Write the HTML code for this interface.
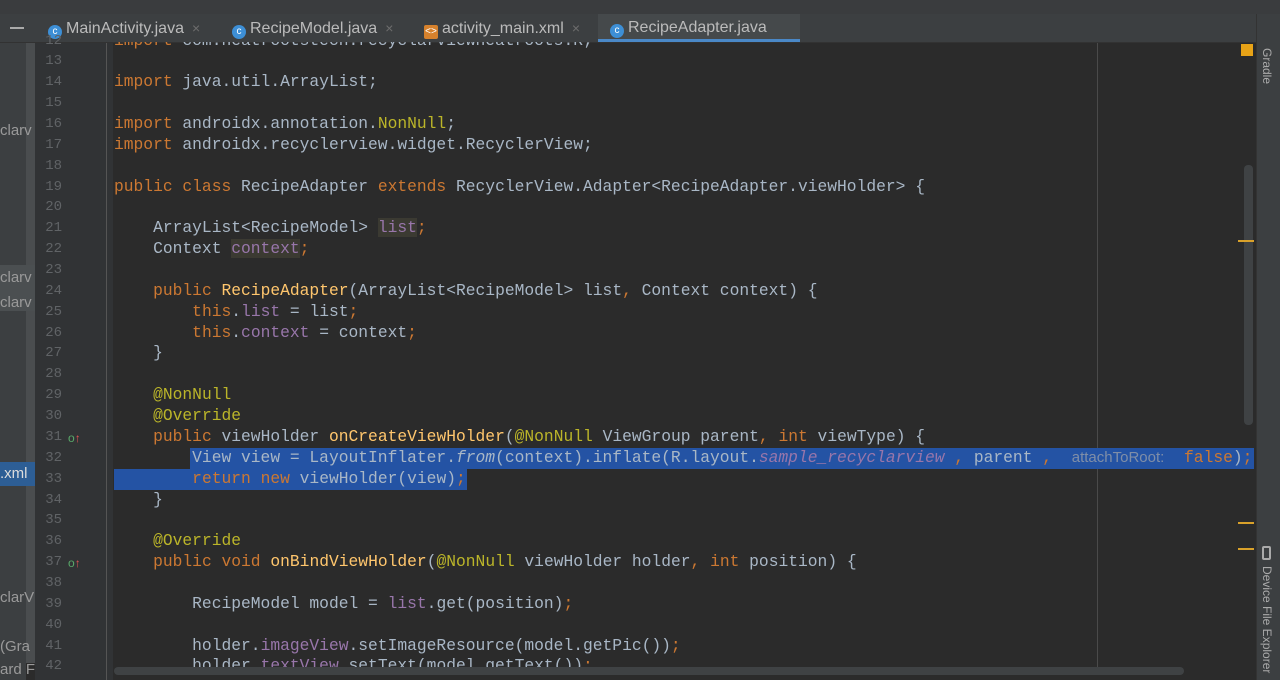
<!DOCTYPE html><html><head><style>
body{margin:0;width:1280px;height:680px;overflow:hidden;background:#2b2b2b;position:relative;font-family:"Liberation Sans",sans-serif}
.abs{position:absolute}
.code{position:absolute;left:114px;top:30.6px;font-family:"Liberation Mono",monospace;font-size:16.3px;line-height:20.86px;color:#a9b7c6;white-space:pre}
.ln{position:absolute;left:38px;top:30.6px;width:24px;text-align:right;font-family:"Liberation Mono",monospace;font-size:14px;line-height:20.86px;color:#606366;white-space:pre}
.k{color:#cc7832}.a{color:#bbb529}.f{color:#ffc66d}.p{color:#9876aa}.i{font-style:italic}
.tab{position:absolute;top:14px;height:28px;line-height:28px;font-size:16px;color:#bbbbbb}
.ci{display:inline-block;width:14px;height:14px;border-radius:50%;background:#3d8fd6;color:#fff;font-size:10px;line-height:14px;text-align:center;vertical-align:-1px;margin-right:4px}
.x{color:#6d6d6d;margin-left:8px;font-size:14px}
.lp{position:absolute;left:0;font-size:15px;color:#9a9a9a}
</style></head><body>
<div class="abs" style="left:0;top:0;width:1280px;height:14px;background:#3a3c3e"></div>
<div class="abs" style="left:0;top:14px;width:1256px;height:28px;background:#3c3f41;border-bottom:1px solid #323232"></div>
<div class="abs" style="left:10px;top:27px;width:14px;height:2px;background:#aaa"></div>
<div class="tab" style="left:48px"><span class="ci">c</span>MainActivity.java<span class="x">×</span></div>
<div class="tab" style="left:232px"><span class="ci">c</span>RecipeModel.java<span class="x">×</span></div>
<div class="tab" style="left:424px"><span class="ci" style="background:#d6812c;border-radius:2px">&lt;&gt;</span>activity_main.xml<span class="x">×</span></div>
<div class="tab" style="left:598px;width:202px;background:#45494b"><span class="ci" style="margin-left:12px">c</span>RecipeAdapter.java</div>
<div class="abs" style="left:598px;top:39px;width:202px;height:3px;background:#4a88c7"></div>
<div class="abs" style="left:0;top:43px;width:26px;height:637px;background:#3c3f41"></div>
<div class="abs" style="left:26px;top:43px;width:9px;height:620px;background:#4a4d4f"></div>
<div class="abs" style="left:0;top:265px;width:35px;height:46px;background:#4b4f51"></div>
<div class="abs" style="left:0;top:462px;width:35px;height:24px;background:#2d5e95"></div>
<div class="lp" style="top:122px">clarv</div>
<div class="lp" style="top:269px">clarv</div>
<div class="lp" style="top:294px">clarv</div>
<div class="lp" style="top:465px;color:#ddd">.xml</div>
<div class="lp" style="top:589px">clarV</div>
<div class="lp" style="top:638px">(Gra</div>
<div class="lp" style="top:661px">ard F</div>
<div class="abs" style="left:35px;top:43px;width:78px;height:637px;background:#313335"></div>
<div class="abs" style="left:106px;top:43px;width:1px;height:637px;background:#555"></div>
<div class="abs" style="left:1097px;top:43px;width:1px;height:625px;background:#4a4a4a"></div>
<div class="abs" style="left:190px;top:448px;width:1064px;height:21px;background:#2453a4"></div>
<div class="abs" style="left:114px;top:469px;width:353px;height:21px;background:#2453a4"></div>
<div class="ln">12
13
14
15
16
17
18
19
20
21
22
23
24
25
26
27
28
29
30
31
32
33
34
35
36
37
38
39
40
41
42</div>
<div class="abs" style="left:68px;top:431px;color:#59a869;font-size:12px">o<span style="color:#e05555">↑</span></div>
<div class="abs" style="left:68px;top:556px;color:#59a869;font-size:12px">o<span style="color:#e05555">↑</span></div>
<div class="code" style="clip-path:inset(11.4px 0 0 0)"><span class="k">import</span> com.heatrootstech.recyclarviewheatroots.R;

<span class="k">import</span> java.util.ArrayList;

<span class="k">import</span> androidx.annotation.<span class="a">NonNull</span>;
<span class="k">import</span> androidx.recyclerview.widget.RecyclerView;

<span class="k">public class</span> RecipeAdapter <span class="k">extends</span> RecyclerView.Adapter&lt;RecipeAdapter.viewHolder&gt; {

    ArrayList&lt;RecipeModel&gt; <span class="p" style="background:#3b3a32">list</span><span class="k">;</span>
    Context <span class="p" style="background:#3b3a32">context</span><span class="k">;</span>

    <span class="k">public</span> <span class="f">RecipeAdapter</span>(ArrayList&lt;RecipeModel&gt; list<span class="k">,</span> Context context) {
        <span class="k">this</span>.<span class="p">list</span> = list<span class="k">;</span>
        <span class="k">this</span>.<span class="p">context</span> = context<span class="k">;</span>
    }

    <span class="a">@NonNull</span>
    <span class="a">@Override</span>
    <span class="k">public</span> viewHolder <span class="f">onCreateViewHolder</span>(<span class="a">@NonNull</span> ViewGroup parent<span class="k">,</span> <span class="k">int</span> viewType) {
        View view = LayoutInflater.<span class="i">from</span>(context).inflate(R.layout.<span class="p i">sample_recyclarview</span> <span class="k">,</span> parent <span class="k">,</span><span style="display:inline-block;width:132px;text-align:center;font-family:'Liberation Sans';font-size:15px;color:#7f8ea8">attachToRoot:</span><span class="k">false</span>)<span class="k">;</span>
        <span class="k">return new</span> viewHolder(view)<span class="k">;</span>
    }

    <span class="a">@Override</span>
    <span class="k">public void</span> <span class="f">onBindViewHolder</span>(<span class="a">@NonNull</span> viewHolder holder<span class="k">,</span> <span class="k">int</span> position) {

        RecipeModel model = <span class="p">list</span>.get(position)<span class="k">;</span>

        holder.<span class="p">imageView</span>.setImageResource(model.getPic())<span class="k">;</span>
        holder.<span class="p">textView</span>.setText(model.getText())<span class="k">;</span></div>
<div class="abs" style="left:1244px;top:165px;width:9px;height:260px;background:#3f4244;border-radius:4px"></div>
<div class="abs" style="left:114px;top:667px;width:1070px;height:8px;background:#3f4244;border-radius:4px"></div>
<div class="abs" style="left:1241px;top:44px;width:12px;height:12px;background:#e8a317"></div>
<div class="abs" style="left:1238px;top:240px;width:16px;height:2px;background:#d9a12a"></div>
<div class="abs" style="left:1238px;top:522px;width:16px;height:2px;background:#d9a12a"></div>
<div class="abs" style="left:1238px;top:548px;width:16px;height:2px;background:#d9a12a"></div>
<div class="abs" style="left:1256px;top:14px;width:24px;height:666px;background:#3c3f41;border-left:1px solid #333"></div>
<div class="abs" style="left:1260px;top:48px;writing-mode:vertical-rl;font-size:12px;color:#aaa">Gradle</div>
<div class="abs" style="left:1262px;top:546px;width:9px;height:14px;border:2px solid #aaa;border-radius:2px;box-sizing:border-box"></div>
<div class="abs" style="left:1260px;top:566px;writing-mode:vertical-rl;font-size:12px;color:#aaa">Device File Explorer</div>
</body></html>
